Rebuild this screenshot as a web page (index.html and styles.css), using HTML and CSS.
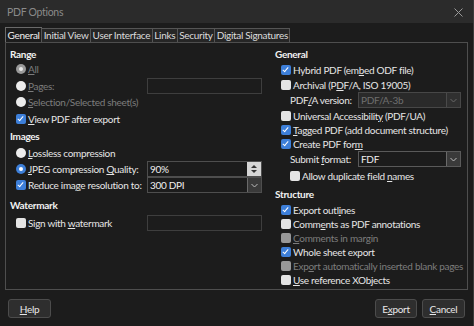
FILE: index.html
```html
<!DOCTYPE html>
<html lang="en">
<head>
<meta charset="UTF-8">
<title>PDF Options</title>
<link rel="stylesheet" href="styles.css">
</head>
<body>
<div class="titlebar">
  <span class="title">PDF Options</span>
  <svg class="close" width="9" height="9" viewBox="0 0 9 9"><path d="M0.5 0.5L8.5 8.5M8.5 0.5L0.5 8.5" stroke="#9a9a9a" stroke-width="1"/></svg>
</div>

<div class="tabs">
  <span class="tab on">General</span><span class="tab">Initial View</span><span class="tab">User Interface</span><span class="tab">Links</span><span class="tab">Security</span><span class="tab">Digital Signatures</span>
</div>

<div class="panel">
  <div class="col left">
    <div class="hd h-range">Range</div>
    <div class="row r16"><span class="radio dis on"></span><span class="lbl dis"><u>A</u>ll</span></div>
    <div class="row r17"><span class="lab"><span class="radio"></span><span class="lbl dis"><u>P</u>ages:</span></span><span class="field dim"></span></div>
    <div class="row r16"><span class="radio"></span><span class="lbl dis"><u>S</u>election/Selected sheet(s)</span></div>
    <div class="row r17"><span class="check on"></span><span class="lbl"><u>V</u>iew PDF after export</span></div>

    <div class="hd h-img">Images</div>
    <div class="row r16"><span class="radio"></span><span class="lbl"><u>L</u>ossless compression</span></div>
    <div class="row r16"><span class="lab"><span class="radio sel"></span><span class="lbl"><u>J</u>PEG compression <u>Q</u>uality:</span></span><span class="field">90%<span class="spin"><i class="up"></i><i class="dn"></i></span></span></div>
    <div class="row r16"><span class="lab"><span class="check on"></span><span class="lbl">Reduce ima<u>g</u>e resolution to:</span></span><span class="field">300 DPI<span class="drop"><svg width="7" height="5" viewBox="0 0 7 5"><path d="M0.5 1L3.5 4L6.5 1" fill="none" stroke="#bbb"/></svg></span></span></div>

    <div class="hd h-wm">Watermark</div>
    <div class="row r16"><span class="lab"><span class="check"></span><span class="lbl">Sign with <u>w</u>atermark</span></span><span class="field dim"></span></div>
  </div>

  <div class="col right">
    <div class="hd h-gen">General</div>
    <div class="row r15 mt1"><span class="check on"></span><span class="lbl">Hybrid PDF (em<u>b</u>ed ODF file)</span></div>
    <div class="row r15"><span class="check"></span><span class="lbl">Archival (P<u>D</u>F/A, ISO 19005)</span></div>
    <div class="row r16 sub"><span class="lab2">PDF<u>/</u>A version:</span><span class="field wide off">PDF/A-3b<span class="drop off"><svg width="7" height="5" viewBox="0 0 7 5"><path d="M0.5 1L3.5 4L6.5 1" fill="none" stroke="#666"/></svg></span></span></div>
    <div class="row r15"><span class="check"></span><span class="lbl">Universal Accessibilit<u>y</u> (PDF/UA)</span></div>
    <div class="row r14"><span class="check on"></span><span class="lbl"><u>T</u>agged PDF (add document structure)</span></div>
    <div class="row r14"><span class="check on"></span><span class="lbl">Create PDF for<u>m</u></span></div>
    <div class="row r16 sub"><span class="lab2">Submit <u>f</u>ormat:</span><span class="field wide">FDF<span class="drop"><svg width="7" height="5" viewBox="0 0 7 5"><path d="M0.5 1L3.5 4L6.5 1" fill="none" stroke="#bbb"/></svg></span></span></div>
    <div class="row r16 mt1 sub"><span class="check"></span><span class="lbl">Allow duplicate field <u>n</u>ames</span></div>

    <div class="hd h-str">Structure</div>
    <div class="row r14"><span class="check on"></span><span class="lbl">Export outl<u>i</u>nes</span></div>
    <div class="row r14"><span class="check"></span><span class="lbl">Comm<u>e</u>nts as PDF annotations</span></div>
    <div class="row r14"><span class="check dis"></span><span class="lbl dis"><u>C</u>omments in margin</span></div>
    <div class="row r14"><span class="check on"></span><span class="lbl">Whole sheet export</span></div>
    <div class="row r14"><span class="check dis"></span><span class="lbl dis">Exp<u>o</u>rt automatically inserted blank pages</span></div>
    <div class="row r14"><span class="check"></span><span class="lbl"><u>U</u>se reference XObjects</span></div>
  </div>
</div>

<div class="foot">
  <button class="btn help"><u>H</u>elp</button>
  <span class="grow"></span>
  <button class="btn">E<u>x</u>port</button>
  <button class="btn cancel"><u>C</u>ancel</button>
</div>
</body>
</html>
```

FILE: styles.css
```css
:root{--bg:#1c1c1c;--bar:#2b2b2b;--txt:#e6e6e6;--dim:#7c7c7c;--line:#4e4e4e;--blue:#3d7fd9}
html,body{margin:0;height:100%}
body{background:var(--bg);color:var(--txt);font-family:Lato,"Open Sans",sans-serif;font-size:10px;letter-spacing:-0.3px;border-right:1px solid #3c3c3c;box-sizing:border-box;overflow:hidden}
u{text-decoration:underline;text-underline-offset:1px}

.titlebar{height:23px;background:var(--bar);display:flex;align-items:center;padding:0 10px 0 7px}
.title{color:#8a8a8a;flex:1;font-size:10.5px}
.close{margin-top:2px}

.tabs{display:flex;align-items:flex-end;height:15px;margin:4px 0 0 5px;position:relative;z-index:1}
.tab{height:13px;line-height:13px;padding:0 1.5px;border:1px solid #555;border-bottom:none;background:#262626;color:#dcdcdc;margin-left:-1px}
.tab:first-child{margin-left:0}
.tab.on{height:14px;line-height:14px;background:var(--bg);color:#f0f0f0;border-color:#6a6a6a}

.panel{margin:0 5px;height:248px;border:1px solid var(--line);box-sizing:border-box;display:grid;grid-template-columns:264px 1fr}
.col{padding-top:4px}
.left{padding-left:4px}
.right{padding-left:5px}

.hd{font-weight:700;color:#f2f2f2;height:14px;line-height:14px}
.h-img{height:18px;line-height:18px}
.h-wm{height:19px;line-height:19px;margin-top:3px}
.h-str{height:17px;line-height:17px;margin-top:2px}

.row{display:flex;align-items:center}
.r14{height:14px}.r15{height:15px}.r16{height:16px}.r17{height:17px}
.mt1{margin-top:1px}
.left .row{padding-left:6px}
.right .row{padding-left:6px}
.right .row.sub{padding-left:15px}
.lab{display:flex;align-items:center;width:131px}
.lab2{width:68px}
.lbl{margin-left:2px;white-space:nowrap}
.dis{color:var(--dim)}

.radio{width:10px;height:10px;border-radius:50%;background:#ececec;flex:none;position:relative}
.radio.dis{background:#9a9a9a}
.radio.sel{background:var(--blue)}
.radio.on::after,.radio.sel::after{content:"";position:absolute;left:3px;top:3px;width:4px;height:4px;border-radius:50%;background:#fff}
.radio.dis.on::after{background:#e8e8e8}

.check{width:10px;height:10px;border-radius:2px;background:#e4e4e4;flex:none;position:relative}
.check.dis{background:#b8b8b8;opacity:.8}
.check.on{background:var(--blue)}
.check.on::after{content:"";position:absolute;left:3px;top:1px;width:2px;height:5px;border:solid #fff;border-width:0 1.2px 1.2px 0;transform:rotate(40deg)}

.field{width:115px;height:16px;box-sizing:border-box;border:1px solid var(--line);padding-left:2px;display:flex;align-items:center;position:relative;color:#f0f0f0}
.field.dim{border-color:#3e3e3e}
.field.wide{width:103px;border-color:#5a5a5a}
.field.off{background:#2a2a2a;color:#6e6e6e;border-color:#474747}
.spin{position:absolute;right:0;top:0;width:14px;height:14px;background:#d6d6d6;display:flex;flex-direction:column;align-items:center;justify-content:center;gap:2px}
.spin i{width:0;height:0;border-left:3px solid transparent;border-right:3px solid transparent}
.spin .up{border-bottom:3px solid #333}
.spin .dn{border-top:3px solid #333}
.drop{position:absolute;right:0;top:0;width:13px;height:14px;background:#3a3a3a;border-left:1px solid #6a6a6a;display:flex;align-items:center;justify-content:center}
.drop.off{background:#303030;border-left-color:#4a4a4a}

.foot{display:flex;gap:5px;margin:9px 8px 0 8px}
.grow{flex:1}
.btn{height:19px;width:42px;padding:0;background:#2e2e2e;border:1px solid #4c4c4c;border-radius:3px;color:#e8e8e8;font:inherit;letter-spacing:inherit}
.help,.cancel{width:43px}
```
